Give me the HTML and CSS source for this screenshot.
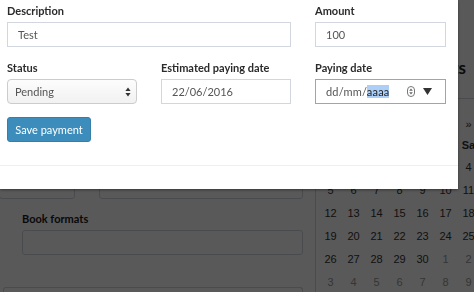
FILE: index.html
```html
<!DOCTYPE html>
<html lang="en">
<head>
  <meta charset="UTF-8" />
  <title>Payments</title>
  <link rel="stylesheet" href="styles.css">
</head>
<body>
  <!-- Page behind the modal -->
  <div class="page">
    <div class="form-col">
      <div class="field-row">
        <div class="box box-small"></div>
        <div class="box box-wide"></div>
      </div>
      <div class="group">
        <label class="bg-label">Book formats</label>
        <div class="box"></div>
      </div>
      <div class="box box-next"></div>
    </div>

    <div class="calendar-panel">
      <h2 class="panel-title">Payments</h2>
      <div class="panel-rule"></div>
      <div class="calendar" id="calendar">
        <span class="nav">«</span>
        <span class="month">June 2016</span>
        <span class="nav">»</span>
      </div>
    </div>
  </div>

  <div class="backdrop"></div>

  <!-- Modal -->
  <div class="modal">
    <div class="modal-body">
      <div class="form-grid">
        <div class="form-group span-2">
          <label>Description</label>
          <div class="control">Test</div>
        </div>
        <div class="form-group">
          <label>Amount</label>
          <div class="control">100</div>
        </div>

        <div class="form-group">
          <label>Status</label>
          <div class="control select">
            <span>Pending</span>
            <svg width="6" height="10" viewBox="0 0 6 10">
              <path d="M3 0.5 L5.6 4 H0.4 Z M3 9.5 L5.6 6 H0.4 Z" fill="#333"/>
            </svg>
          </div>
        </div>
        <div class="form-group">
          <label>Estimated paying date</label>
          <div class="control">22/06/2016</div>
        </div>
        <div class="form-group">
          <label>Paying date</label>
          <div class="control date focus">
            <span class="mask">dd/mm/<span class="picked">aaaa</span></span>
            <svg class="spin" width="8" height="11" viewBox="0 0 8 11">
              <rect x="0.5" y="0.5" width="7" height="10" rx="3.5" fill="none" stroke="#777"/>
              <path d="M4 2.5 L5.8 4.8 H2.2 Z M4 8.5 L5.8 6.2 H2.2 Z" fill="#666"/>
            </svg>
            <svg class="caret" width="9" height="7" viewBox="0 0 9 7">
              <path d="M0 0 H9 L4.5 7 Z" fill="#333"/>
            </svg>
          </div>
        </div>
      </div>
      <button class="btn-primary">Save payment</button>
    </div>
    <div class="modal-footer"></div>
  </div>

  <script>
    const weeks = [
      [29, 30, 31, 1, 2, 3, 4],
      [5, 6, 7, 8, 9, 10, 11],
      [12, 13, 14, 15, 16, 17, 18],
      [19, 20, 21, 22, 23, 24, 25],
      [26, 27, 28, 29, 30, 1, 2],
      [3, 4, 5, 6, 7, 8, 9]
    ];
    const days = ['Su', 'Mo', 'Tu', 'We', 'Th', 'Fr', 'Sa'];
    const cal = document.getElementById('calendar');

    days.forEach(d => {
      const el = document.createElement('span');
      el.className = 'dow';
      el.textContent = d;
      cal.appendChild(el);
    });

    weeks.forEach((week, w) => {
      week.forEach(n => {
        const el = document.createElement('span');
        const muted = (w === 0 && n > 20) || (w >= 4 && n < 10);
        el.className = muted ? 'day muted' : 'day';
        el.textContent = n;
        cal.appendChild(el);
      });
    });
  </script>
</body>
</html>
```

FILE: styles.css
```css
* {
  margin: 0;
  padding: 0;
  box-sizing: border-box;
}

body {
  width: 474px;
  height: 292px;
  overflow: hidden;
  background: #fff;
  font-family: 'Lato', 'Open Sans', sans-serif;
  font-size: 11px;
  color: #333;
}

/* Page behind */
.page {
  display: flex;
  height: 292px;
  overflow: hidden;
}

.form-col {
  width: 315px;
  flex: none;
  padding-top: 174px;
}

.field-row {
  display: flex;
  gap: 24px;
}

.box {
  height: 25px;
  border: 1px solid #d2d6de;
  border-radius: 3px;
  margin-right: 12px;
}

.box-small {
  width: 76px;
  margin-left: -1px;
  margin-right: 0;
}

.box-wide {
  width: 204px;
}

.group {
  padding-left: 22px;
  margin-top: 12px;
}

.bg-label {
  display: block;
  font-weight: bold;
  line-height: 15px;
  margin-bottom: 4px;
  color: #1a1a1a;
}

.box-next {
  height: 5px;
  margin-top: 32px;
  margin-left: 3px;
  border-bottom: none;
  border-radius: 3px 3px 0 0;
}

.calendar-panel {
  flex: 1;
  border-left: 1px solid #d2d6de;
  overflow: hidden;
  padding-left: 3px;
  font-family: 'Liberation Sans', Arial, sans-serif;
}

.panel-title {
  margin-top: 58px;
  font-family: 'Lato', sans-serif;
  font-size: 17px;
  line-height: 20px;
  text-align: right;
  padding-right: 8px;
  color: #222;
}

.panel-rule {
  margin-top: 20px;
  margin-left: -3px;
  border-top: 1px solid #d2d6de;
}

.calendar {
  display: grid;
  grid-template-columns: repeat(7, 23px);
  grid-auto-rows: 23px;
  margin-top: 14px;
  width: 161px;
  text-align: center;
  font-size: 11px;
  color: #333;
}

.calendar .nav {
  line-height: 22px;
  height: 22px;
}

.calendar .month {
  grid-column: span 5;
  font-weight: bold;
  line-height: 22px;
}

.calendar .dow {
  font-weight: bold;
  line-height: 20px;
  height: 20px;
  margin-top: -1px;
}

.calendar .day {
  line-height: 23px;
  margin-top: -3px;
}

.calendar .muted {
  color: #999;
}

/* Backdrop + modal */
.backdrop {
  position: fixed;
  inset: 0;
  background: rgba(0, 0, 0, 0.65);
}

.modal {
  position: fixed;
  top: 0;
  left: 0;
  width: 458px;
  background: #fff;
  box-shadow: 0 1px 3px rgba(0, 0, 0, 0.4);
}

.modal-body {
  padding: 3px 12px 23px 7px;
}

.form-grid {
  display: grid;
  grid-template-columns: 130px 130px 1fr;
  column-gap: 24px;
}

.span-2 {
  grid-column: span 2;
}

.form-group {
  margin-bottom: 13px;
}

.form-group label {
  display: block;
  font-weight: bold;
  line-height: 15px;
  margin-bottom: 4px;
  color: #2b2b2b;
}

.control {
  height: 25px;
  border: 1px solid #d2d6de;
  padding: 0 10px;
  display: flex;
  align-items: center;
  color: #555;
}

.select {
  justify-content: space-between;
  border-color: #ccc;
  border-radius: 4px;
  padding: 0 5px 0 7px;
  background: linear-gradient(#fdfdfd, #f1f1f1);
}

.date {
  padding-right: 13px;
}

.focus {
  border-color: #7daedb;
}

.mask {
  flex: 1;
  letter-spacing: 0.2px;
}

.picked {
  background: #accef7;
  color: #222;
}

.spin {
  margin-right: 8px;
}

.btn-primary {
  display: block;
  width: 84px;
  height: 25px;
  background: #3c8dbc;
  border: 1px solid #367fa9;
  border-radius: 3px;
  color: #fff;
  font-family: inherit;
  font-size: 11px;
}

.modal-footer {
  height: 24px;
  border-top: 1px solid #f0f0f0;
}
```
